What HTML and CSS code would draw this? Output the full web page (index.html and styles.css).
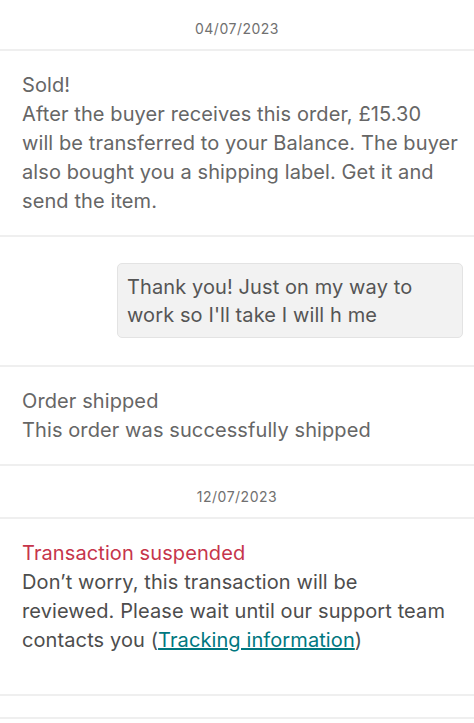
FILE: index.html
```html
<!DOCTYPE html>
<html lang="en">
<head>
  <meta charset="UTF-8" />
  <meta name="viewport" content="width=device-width, initial-scale=1.0"/>
  <title>Conversation</title>
  <link rel="stylesheet" href="styles.css">
</head>
<body>

  <div class="thread">
    <div class="date">04/07/2023</div>

    <div class="event">
      <div class="event-title">Sold!</div>
      <div class="event-body">After the buyer receives this order, £15.30 will be transferred to your Balance. The buyer also bought you a shipping label. Get it and send the item.</div>
    </div>

    <div class="message-row">
      <div class="bubble">Thank you! Just on my way to work so I'll take I will h me</div>
    </div>

    <div class="event">
      <div class="event-title">Order shipped</div>
      <div class="event-body">This order was successfully shipped</div>
    </div>

    <div class="date">12/07/2023</div>

    <div class="event event-last">
      <div class="event-title alert">Transaction suspended</div>
      <div class="event-body dark">Don’t worry, this transaction will be reviewed. Please wait until our support team contacts you (<a href="#">Tracking information</a>)</div>
    </div>

    <div class="spacer"></div>
  </div>

</body>
</html>
```

FILE: styles.css
```css
body {
  font-family: Inter, 'Liberation Sans', sans-serif;
  background-color: #fff;
  margin: 0;
  color: #666;
}

.thread {
  margin-top: -2px;
}

.date {
  padding: 21px 0 10px;
  line-height: 20px;
  font-size: 14px;
  letter-spacing: 0.5px;
  text-align: center;
  color: #707070;
  border-bottom: 2px solid #efefef;
}

.event {
  padding: 20px 16px 19px 22px;
  font-size: 20px;
  line-height: 29px;
  letter-spacing: 0.1px;
  border-bottom: 2px solid #efefef;
}

.event-last {
  padding-right: 26px;
  padding-bottom: 39px;
}

.alert {
  color: #c6354b;
}

.dark {
  color: #4d4d4d;
}

.event-body a {
  color: #00777f;
  text-decoration: underline;
}

.message-row {
  display: flex;
  justify-content: flex-end;
  padding: 26px 11px 27px;
  border-bottom: 2px solid #efefef;
}

.bubble {
  width: 326px;
  padding: 9px 9px 8px;
  background-color: #f2f2f2;
  border: 1px solid #e3e3e3;
  border-radius: 5px;
  font-size: 20px;
  line-height: 28px;
  letter-spacing: 0.1px;
  color: #555;
}

.spacer {
  height: 21px;
  border-bottom: 2px solid #efefef;
}
```
